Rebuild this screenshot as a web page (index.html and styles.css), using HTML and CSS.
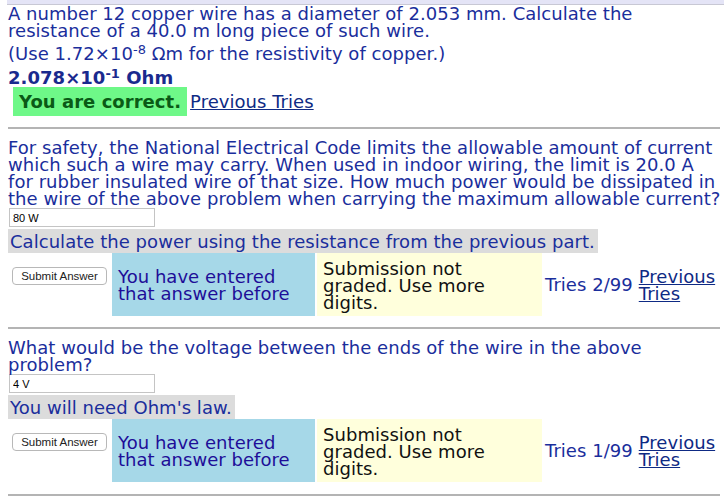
FILE: index.html
```html
<!DOCTYPE html>
<html>
<head>
<meta charset="utf-8">
<link rel="stylesheet" href="styles.css">
</head>
<body>
<div class="topstrip"></div>
<div class="part first">
  <div class="q">A number 12 copper wire has a diameter of 2.053 mm. Calculate the resistance of a 40.0 m long piece of such wire.</div>
  <div class="q use">(Use 1.72×10<sup>-8</sup> Ωm for the resistivity of copper.)</div>
  <div class="answer">2.078×10<sup>-1</sup> Ohm</div>
  <div class="correct-row"><span class="correct">You are correct.</span><a href="#" class="link">Previous Tries</a></div>
</div>
<hr class="sep">
<div class="part">
  <div class="q">For safety, the National Electrical Code limits the allowable amount of current which such a wire may carry. When used in indoor wiring, the limit is 20.0 A for rubber insulated wire of that size. How much power would be dissipated in the wire of the above problem when carrying the maximum allowable current?</div>
  <input class="ans" type="text" value="80 W">
  <div class="hint-wrap"><span class="hint">Calculate the power using the resistance from the previous part.</span></div>
  <div class="row">
    <button class="submit">Submit Answer</button>
    <div class="entered">You have entered that answer before</div>
    <div class="notgraded">Submission not graded. Use more digits.</div>
    <div class="tries">Tries 2/99</div>
    <a href="#" class="link prev">Previous Tries</a>
  </div>
</div>
<hr class="sep">
<div class="part">
  <div class="q">What would be the voltage between the ends of the wire in the above problem?</div>
  <input class="ans" type="text" value="4 V">
  <div class="hint-wrap"><span class="hint">You will need Ohm's law.</span></div>
  <div class="row">
    <button class="submit">Submit Answer</button>
    <div class="entered">You have entered that answer before</div>
    <div class="notgraded">Submission not graded. Use more digits.</div>
    <div class="tries">Tries 1/99</div>
    <a href="#" class="link prev">Previous Tries</a>
  </div>
</div>
<hr class="sep last">
</body>
</html>
```
FILE: styles.css
```css
html, body {
  margin: 0;
  padding: 0;
  background: #ffffff;
}
body {
  padding: 0 2px 0 8px;
  font-family: "DejaVu Sans", Verdana, sans-serif;
  font-size: 18px;
  letter-spacing: 0.04px;
  line-height: 17px;
  color: #1a2e9c;
}
.topstrip {
  height: 4px;
  margin-left: -1px;
  margin-right: -2px;
  background: #e4e4f6;
  border-bottom: 1px solid #c8c8d4;
}
.part .q:first-child {
  margin-top: 10px;
}
.part.first .q:first-child {
  margin-top: 0;
}
.use {
  margin-top: 6px;
}
sup {
  font-size: 13px;
  line-height: 0;
  vertical-align: 6px;
}
.answer {
  font-weight: bold;
  margin-top: 7px;
  color: #1a2a8e;
}
.correct-row {
  margin-top: 1px;
  padding-left: 5px;
  display: flex;
  align-items: center;
  gap: 3px;
}
.correct {
  display: inline-block;
  background: #6ef888;
  color: #0a5a16;
  font-weight: bold;
  padding: 6px 6px 6px 6px;
}
.link {
  color: #0e2a84;
  text-decoration: underline;
}
.sep {
  border: 0;
  border-top: 2px solid #b4b4b4;
  margin: 11px 2px 0 0;
  height: 0;
}
.sep.last {
  margin-top: 12px;
}
.ans {
  display: block;
  margin: 1px 0 0 1px;
  width: 146px;
  height: 19px;
  box-sizing: border-box;
  border: 1px solid #c4c4c4;
  font-family: "Liberation Sans", Arial, sans-serif;
  font-size: 11px;
  letter-spacing: 0;
  padding: 0 3px;
  color: #000;
}
.hint-wrap {
  margin-top: 2px;
}
.hint {
  display: inline-block;
  background: #dcdcdc;
  padding: 4px 3px 3px 2px;
}
.row {
  display: flex;
  align-items: center;
  margin-left: 4px;
}
.submit {
  align-self: flex-start;
  margin-top: 14px;
  font-family: "Liberation Sans", Arial, sans-serif;
  font-size: 11.5px;
  letter-spacing: 0;
  color: #222;
  background: #fff;
  border: 1px solid #b8b8b8;
  border-radius: 4px;
  padding: 0 6px;
  width: 95px;
  height: 18px;
  margin-right: 5px;
}
.entered {
  background: #a6d8e8;
  color: #1e0e98;
  width: 203px;
  height: 63px;
  box-sizing: border-box;
  padding: 0 8px 0 6px;
  display: flex;
  align-items: center;
}
.notgraded {
  background: #ffffdc;
  color: #111;
  width: 225px;
  height: 63px;
  margin-left: 2px;
  padding: 7px 12px 0 6px;
  box-sizing: border-box;
}
.tries {
  margin-left: 3px;
  white-space: nowrap;
}
.prev {
  width: 80px;
  margin-left: 6px;
}
```
